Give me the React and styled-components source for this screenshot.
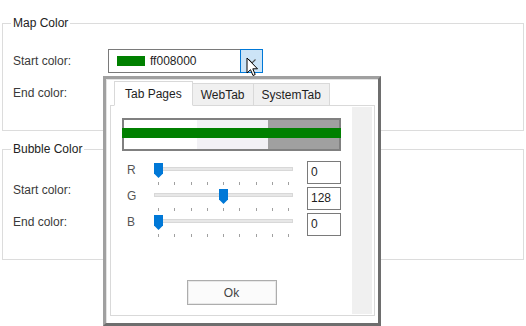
import React from "react";
import styled, { createGlobalStyle } from "styled-components";

const channels = [
  { name: "R", value: 0 },
  { name: "G", value: 128 },
  { name: "B", value: 0 }
];

const App = () => {
  return (
    <Page>
      <GlobalStyle />
      <GroupBox $top={16} $pad={18}>
        <Legend>Map Color</Legend>
        <Rows>
          <Row>
            <Label>Start color:</Label>
            <Combo>
              <ComboField>
                <Swatch $color="#008000" />
                <ComboText>ff008000</ComboText>
              </ComboField>
              <DropButton>
                <svg width="8" height="5" viewBox="0 0 8 5">
                  <path d="M0.5 0.5 L4 4 L7.5 0.5" fill="none" stroke="#505050" strokeWidth="1.2" />
                </svg>
              </DropButton>
            </Combo>
          </Row>
          <Row>
            <Label>End color:</Label>
          </Row>
        </Rows>
      </GroupBox>

      <GroupBox $top={11} $pad={21}>
        <Legend>Bubble Color</Legend>
        <Rows>
          <Row>
            <Label>Start color:</Label>
          </Row>
          <Row>
            <Label>End color:</Label>
          </Row>
        </Rows>
      </GroupBox>

      <Popup>
        <TabStrip>
          <Tab $active>Tab Pages</Tab>
          <Tab>WebTab</Tab>
          <Tab>SystemTab</Tab>
        </TabStrip>
        <Panel>
          <PanelContent>
            <ColorBar>
              <Stripe $color="#008000" />
            </ColorBar>
            <Sliders>
              {channels.map((c) => (
                <SliderRow key={c.name}>
                  <ChannelName>{c.name}</ChannelName>
                  <Slider>
                    <Track />
                    <Thumb style={{ left: Math.round((c.value / 255) * 130) }}>
                      <svg width="9" height="15" viewBox="0 0 9 15">
                        <path d="M0 0 H9 V10.5 L4.5 15 L0 10.5 Z" fill="#0078d7" />
                      </svg>
                    </Thumb>
                    <Ticks>
                      {Array.from({ length: 9 }).map((_, i) => (
                        <Tick key={i} />
                      ))}
                    </Ticks>
                  </Slider>
                  <ValueBox>{c.value}</ValueBox>
                </SliderRow>
              ))}
            </Sliders>
            <OkButton>Ok</OkButton>
          </PanelContent>
          <ScrollTrack />
        </Panel>
      </Popup>

      <Cursor>
        <svg width="13" height="20" viewBox="0 0 13 20">
          <path
            d="M1 1 L1 16 L4.5 12.7 L7 18.5 L9.2 17.5 L6.8 11.8 L11.5 11.8 Z"
            fill="#fff"
            stroke="#000"
            strokeWidth="1"
            strokeLinejoin="round"
          />
        </svg>
      </Cursor>
    </Page>
  );
};

const GlobalStyle = createGlobalStyle`
  html, body {
    margin: 0;
    padding: 0;
    background: #fff;
  }
  body {
    font-family: "Liberation Sans", Arial, sans-serif;
    font-size: 12px;
    color: #333;
  }
`;

const Page = styled.div`
  position: relative;
  display: flow-root;
  width: 526px;
  height: 326px;
  padding: 0 2px;
  box-sizing: border-box;
  overflow: hidden;
`;

const GroupBox = styled.fieldset`
  margin: ${(props) => props.$top}px 0 0;
  padding: ${(props) => props.$pad}px 8px 25px;
  border: 1px solid #dcdcdc;
  min-width: 0;
`;

const Legend = styled.legend`
  padding: 0 2px;
  font-size: 12px;
  line-height: 15px;
  color: #222;
`;

const Rows = styled.div`
  display: flex;
  flex-direction: column;
  gap: 8px;
  padding-left: 2px;
`;

const Row = styled.div`
  display: grid;
  grid-template-columns: 95px auto;
  align-items: center;
  height: 24px;
`;

const Label = styled.span`
  color: #3a3a3a;
`;

const Combo = styled.div`
  display: flex;
  height: 24px;
`;

const ComboField = styled.div`
  display: flex;
  align-items: center;
  gap: 5px;
  width: 132px;
  box-sizing: border-box;
  border: 1px solid #7a7a7a;
  border-right: none;
  padding-left: 8px;
`;

const Swatch = styled.span`
  width: 28px;
  height: 10px;
  background: ${(props) => props.$color};
`;

const ComboText = styled.span`
  color: #1e1e1e;
`;

const DropButton = styled.div`
  display: flex;
  align-items: center;
  justify-content: center;
  width: 23px;
  box-sizing: border-box;
  border: 1px solid #0078d7;
  background: #cce4f7;
`;

const Popup = styled.div`
  position: absolute;
  left: 103px;
  top: 76px;
  width: 278px;
  height: 250px;
  box-sizing: border-box;
  border: 3px solid;
  border-color: #a0a0a0 #6e6e6e #6e6e6e #a0a0a0;
  box-shadow: inset 1px 1px 0 #e3e3e3;
  background: #fff;
  padding: 2px 3px 7px 4px;
  display: flex;
  flex-direction: column;
`;

const TabStrip = styled.div`
  display: flex;
  align-items: flex-end;
  padding-left: 4px;
  position: relative;
  z-index: 1;
`;

const Tab = styled.div`
  height: ${(props) => (props.$active ? 25 : 22)}px;
  padding: 0 ${(props) => (props.$active ? 10 : 8)}px;
  box-sizing: border-box;
  display: flex;
  align-items: center;
  border: 1px solid #d9d9d9;
  border-bottom: ${(props) => (props.$active ? "1px solid #fff" : "none")};
  margin-bottom: ${(props) => (props.$active ? -1 : 0)}px;
  background: ${(props) => (props.$active ? "#fff" : "#f0f0f0")};
  color: #1e1e1e;
  & + & {
    border-left: none;
  }
`;

const Panel = styled.div`
  flex: 1;
  display: flex;
  border: 1px solid #d9d9d9;
`;

const PanelContent = styled.div`
  flex: 1;
  min-width: 0;
  display: flex;
  flex-direction: column;
  padding: 12px 11px 10px;
`;

const ScrollTrack = styled.div`
  flex-shrink: 0;
  width: 20px;
  margin: 1px 2px 1px 0;
  background: #f0f0f0;
`;

const ColorBar = styled.div`
  height: 33px;
  box-sizing: border-box;
  border: 2px solid #808080;
  padding-top: 8px;
  background: linear-gradient(
    to right,
    #fff 0 34%,
    #f2f1f5 34% 67%,
    #a0a0a0 67% 100%
  );
`;

const Stripe = styled.div`
  height: 10px;
  margin: 0 -2px;
  background: ${(props) => props.$color};
`;

const Sliders = styled.div`
  display: flex;
  flex-direction: column;
  gap: 3px;
  margin-top: 10px;
`;

const SliderRow = styled.div`
  display: grid;
  grid-template-columns: 27px 139px 1fr;
  padding-left: 5px;
  height: 23px;
`;

const ChannelName = styled.span`
  padding-top: 2px;
  line-height: 15px;
  color: #555;
`;

const Slider = styled.div`
  position: relative;
  height: 23px;
`;

const Track = styled.div`
  position: absolute;
  left: 0;
  right: 0;
  top: 6px;
  height: 4px;
  box-sizing: border-box;
  background: #e7e7e7;
  border: 1px solid #d8d8d8;
`;

const Thumb = styled.div`
  position: absolute;
  top: 2px;
  width: 9px;
  height: 15px;
  line-height: 0;
`;

const Ticks = styled.div`
  position: absolute;
  left: 4px;
  right: 4px;
  top: 21px;
  display: flex;
  justify-content: space-between;
`;

const Tick = styled.span`
  width: 1px;
  height: 3px;
  background: #a0a0a0;
`;

const ValueBox = styled.div`
  justify-self: end;
  width: 34px;
  height: 23px;
  box-sizing: border-box;
  border: 1px solid #7a7a7a;
  padding: 0 3px;
  line-height: 21px;
  color: #1e1e1e;
`;

const OkButton = styled.div`
  margin-top: auto;
  align-self: center;
  width: 90px;
  height: 25px;
  box-sizing: border-box;
  display: flex;
  align-items: center;
  justify-content: center;
  border: 1px solid #adadad;
  box-shadow: inset 0 0 0 1px #e8e8e8;
  background: #fbfbfb;
  color: #444;
`;

const Cursor = styled.div`
  position: absolute;
  left: 246px;
  top: 57px;
  line-height: 0;
  pointer-events: none;
`;

export default App;
